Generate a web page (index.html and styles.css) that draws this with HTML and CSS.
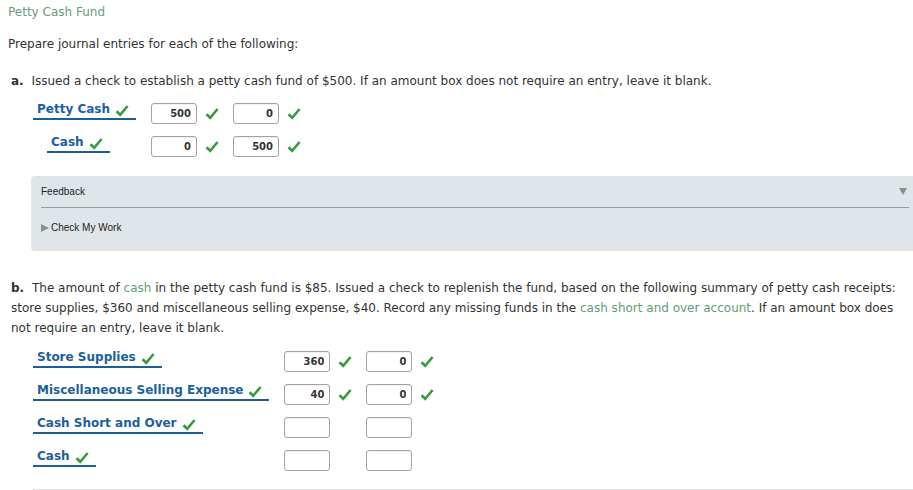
FILE: index.html
```html
<!DOCTYPE html>
<html lang="en">
<head>
<meta charset="utf-8">
<title>Petty Cash Fund</title>
<link rel="stylesheet" href="styles.css">
</head>
<body>
<div class="page">
  <div class="title">Petty Cash Fund</div>
  <p class="intro">Prepare journal entries for each of the following:</p>

  <p class="question"><b class="qn">a.</b> Issued a check to establish a petty cash fund of $500. If an amount box does not require an entry, leave it blank.</p>

  <div class="entries">
    <div class="acct"><span class="label">Petty Cash <svg class="chk" viewBox="0 0 14 13"><path d="M1.5 7.2 L5.2 10.8 L12.6 2"/></svg></span></div>
    <div class="cell"><input class="amt" type="text" value="500" readonly><svg class="chk" viewBox="0 0 14 13"><path d="M1.5 7.2 L5.2 10.8 L12.6 2"/></svg></div>
    <div class="cell"><input class="amt" type="text" value="0" readonly><svg class="chk" viewBox="0 0 14 13"><path d="M1.5 7.2 L5.2 10.8 L12.6 2"/></svg></div>

    <div class="acct credit"><span class="label">Cash <svg class="chk" viewBox="0 0 14 13"><path d="M1.5 7.2 L5.2 10.8 L12.6 2"/></svg></span></div>
    <div class="cell"><input class="amt" type="text" value="0" readonly><svg class="chk" viewBox="0 0 14 13"><path d="M1.5 7.2 L5.2 10.8 L12.6 2"/></svg></div>
    <div class="cell"><input class="amt" type="text" value="500" readonly><svg class="chk" viewBox="0 0 14 13"><path d="M1.5 7.2 L5.2 10.8 L12.6 2"/></svg></div>
  </div>

  <div class="feedback">
    <div class="fb-head">
      <span>Feedback</span>
      <span class="fb-toggle"></span>
    </div>
    <div class="fb-body"><span class="fb-arrow"></span>Check My Work</div>
  </div>

  <p class="question qb"><b class="qn">b.</b> The amount of <span class="term">cash</span> in the petty cash fund is $85. Issued a check to replenish the fund, based on the following summary of petty cash receipts: store supplies, $360 and miscellaneous selling expense, $40. Record any missing funds in the <span class="term">cash short and over account</span>. If an amount box does not require an entry, leave it blank.</p>

  <div class="entries">
    <div class="acct"><span class="label">Store Supplies <svg class="chk" viewBox="0 0 14 13"><path d="M1.5 7.2 L5.2 10.8 L12.6 2"/></svg></span></div>
    <div class="cell"><input class="amt" type="text" value="360" readonly><svg class="chk" viewBox="0 0 14 13"><path d="M1.5 7.2 L5.2 10.8 L12.6 2"/></svg></div>
    <div class="cell"><input class="amt" type="text" value="0" readonly><svg class="chk" viewBox="0 0 14 13"><path d="M1.5 7.2 L5.2 10.8 L12.6 2"/></svg></div>

    <div class="acct"><span class="label">Miscellaneous Selling Expense <svg class="chk" viewBox="0 0 14 13"><path d="M1.5 7.2 L5.2 10.8 L12.6 2"/></svg></span></div>
    <div class="cell"><input class="amt" type="text" value="40" readonly><svg class="chk" viewBox="0 0 14 13"><path d="M1.5 7.2 L5.2 10.8 L12.6 2"/></svg></div>
    <div class="cell"><input class="amt" type="text" value="0" readonly><svg class="chk" viewBox="0 0 14 13"><path d="M1.5 7.2 L5.2 10.8 L12.6 2"/></svg></div>

    <div class="acct"><span class="label">Cash Short and Over <svg class="chk" viewBox="0 0 14 13"><path d="M1.5 7.2 L5.2 10.8 L12.6 2"/></svg></span></div>
    <div class="cell"><input class="amt" type="text" value="" readonly></div>
    <div class="cell"><input class="amt" type="text" value="" readonly></div>

    <div class="acct"><span class="label">Cash <svg class="chk" viewBox="0 0 14 13"><path d="M1.5 7.2 L5.2 10.8 L12.6 2"/></svg></span></div>
    <div class="cell"><input class="amt" type="text" value="" readonly></div>
    <div class="cell"><input class="amt" type="text" value="" readonly></div>
  </div>

  <div class="endline"></div>
</div>
</body>
</html>
```

FILE: styles.css
```css
html, body {
  margin: 0;
  padding: 0;
  background: #ffffff;
}

body {
  font-family: "DejaVu Sans", Verdana, sans-serif;
  font-size: 12px;
  color: #333333;
  overflow: hidden;
}

.page {
  padding: 4px 0 0 8px;
}

.title {
  line-height: 16px;
  color: #6a9c7d;
}

.intro {
  margin: 16px 0 0 0;
  line-height: 16px;
}

.question {
  margin: 19px 8px 0 3px;
  line-height: 20px;
}

.qn {
  margin-right: 4px;
  color: #333333;
}

.qb {
  margin-top: 27px;
}

.term {
  color: #5f9e76;
}

.entries {
  display: grid;
  grid-template-columns: max-content 82px 82px;
  grid-auto-rows: 33px;
  margin: 10px 0 0 25px;
}

.qb + .entries {
  margin-top: 11px;
}

.acct {
  display: flex;
  align-items: flex-start;
  padding-right: 15px;
}

.acct.credit {
  padding-left: 14px;
}

.label {
  display: inline-flex;
  align-items: center;
  line-height: 16px;
  padding: 0 7px 1px 4px;
  border-bottom: 2px solid #1b5e98;
  font-weight: bold;
  color: #1c5f9c;
  white-space: nowrap;
}

.label .chk {
  margin: 2px 0 0 5px;
}

.chk {
  width: 14px;
  height: 13px;
  flex: none;
}

.chk path {
  fill: none;
  stroke: #3a9a3f;
  stroke-width: 2.6;
  stroke-linecap: butt;
  stroke-linejoin: miter;
}

.cell {
  display: flex;
  align-items: flex-start;
  padding-top: 2px;
}

.cell .chk {
  margin: 4px 0 0 8px;
}

.amt {
  box-sizing: border-box;
  width: 46px;
  height: 21px;
  margin: 0;
  padding: 0 5px 0 2px;
  border: 1px solid #a3a3a3;
  border-radius: 3px;
  background: #ffffff;
  box-shadow: inset 0 1px 1px rgba(0, 0, 0, 0.06);
  font-family: "DejaVu Sans", Verdana, sans-serif;
  font-size: 10px;
  font-weight: bold;
  color: #333333;
  text-align: right;
  outline: none;
}

.feedback {
  margin: 9px 0 0 23px;
  background: #dfe6e9;
  border-radius: 4px 0 0 4px;
  height: 75px;
  box-sizing: border-box;
  font-family: "Liberation Sans", Arial, sans-serif;
  font-size: 10px;
  color: #222222;
}

.fb-head {
  display: flex;
  justify-content: space-between;
  align-items: flex-start;
  margin: 0 4px 0 10px;
  padding-top: 10px;
  height: 21px;
  line-height: 12px;
  border-bottom: 1px solid #9a9a9a;
}

.fb-toggle {
  width: 0;
  height: 0;
  margin: 2px 2px 0 0;
  border-left: 4px solid transparent;
  border-right: 4px solid transparent;
  border-top: 7px solid #8d8d8d;
}

.fb-body {
  display: flex;
  align-items: center;
  margin: 0 0 0 10px;
  padding-top: 14px;
  line-height: 12px;
}

.fb-arrow {
  width: 0;
  height: 0;
  margin-right: 2px;
  border-top: 4px solid transparent;
  border-bottom: 4px solid transparent;
  border-left: 8px solid #8d8d8d;
}

.endline {
  margin: 8px 0 0 25px;
  border-top: 1px solid #dedede;
}
```
